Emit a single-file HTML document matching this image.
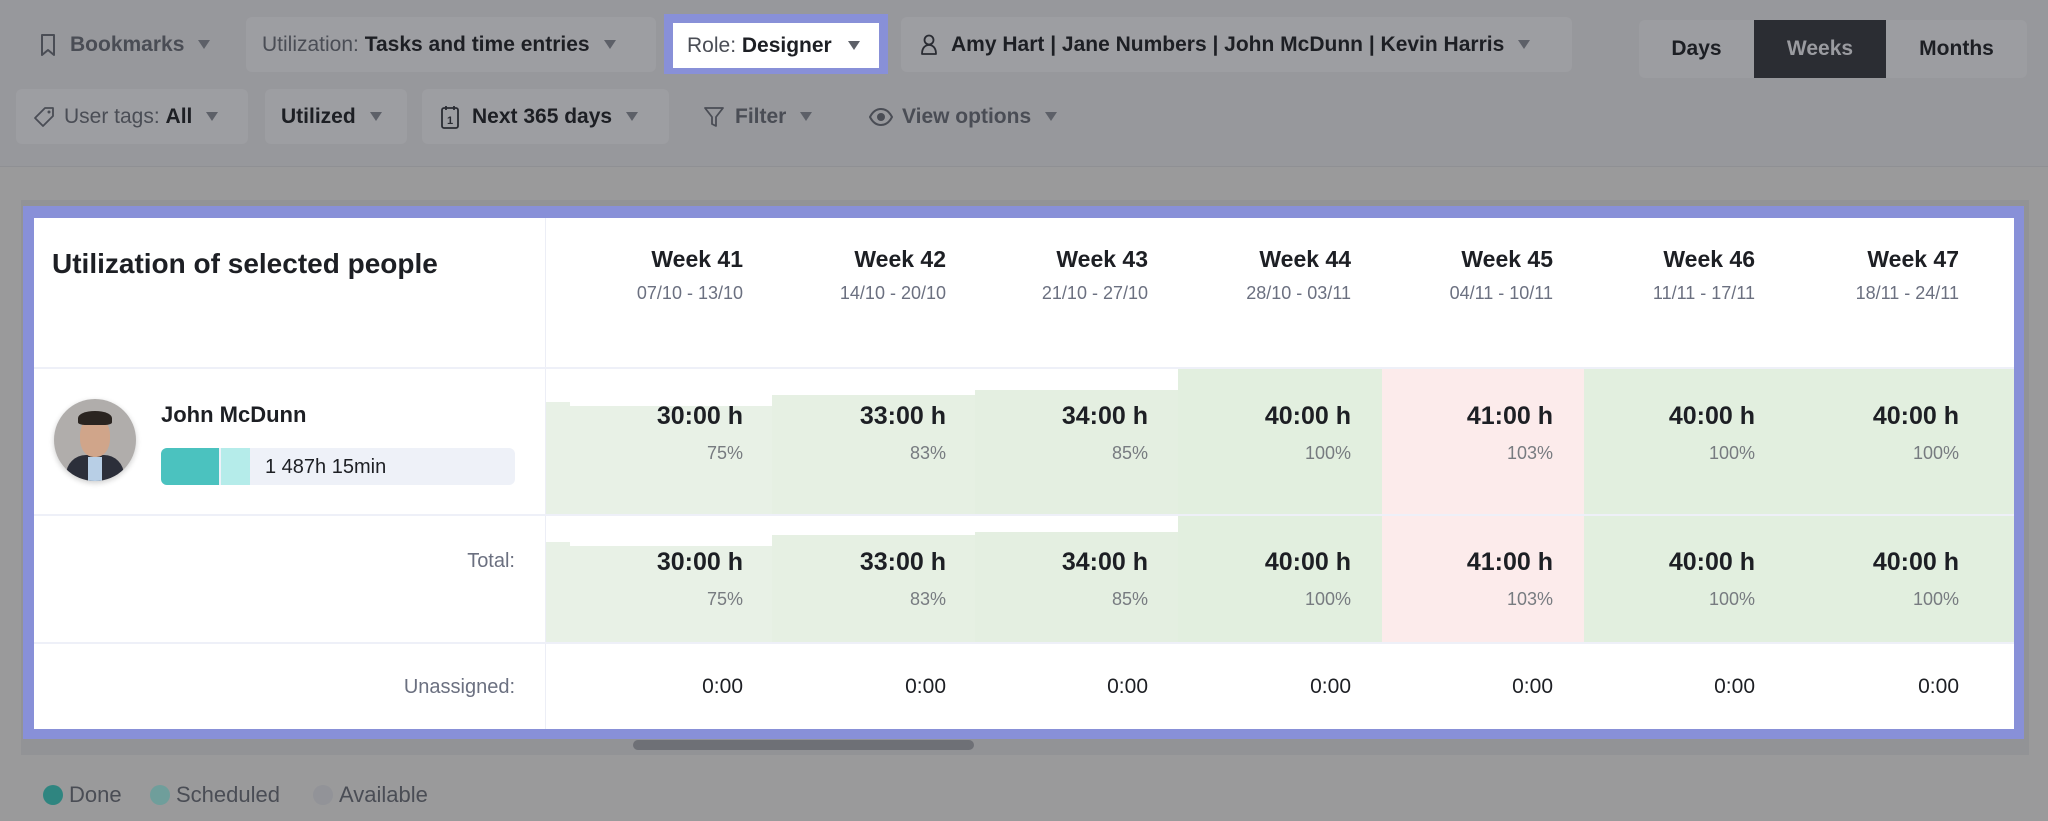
<!DOCTYPE html>
<html><head><meta charset="utf-8"><style>
*{margin:0;padding:0;box-sizing:border-box}
body{width:2048px;height:821px;background:#9a9a9b;font-family:"Liberation Sans",Arial,sans-serif;position:relative;overflow:hidden}
.a{position:absolute}
.topbg{left:0;top:0;width:2048px;height:167px;background:#97989c;border-bottom:1px solid #8f9094}
.btn{position:absolute;background:#9d9ea2;border-radius:6px;height:55px;display:flex;align-items:center;font-size:21px;color:#1d1f24;font-weight:bold;white-space:nowrap}
.lbl{color:#4a4d55;font-weight:normal}
.arr{display:inline-block;width:0;height:0;border-left:6px solid transparent;border-right:6px solid transparent;border-top:9px solid #5d6068;margin-left:14px}
.wk{position:absolute;text-align:right;width:200px}
.wt{font-size:23px;font-weight:bold;color:#1d1f24}
.wd{font-size:18px;color:#6b7080;margin-top:10px}
.h{font-size:25px;font-weight:bold;color:#1d1f24}
.p{font-size:18px;color:#777b80;margin-top:12px}
.z{font-size:21px;color:#1d1f24}
.cell{position:absolute}
</style></head><body>
<div class="a topbg"></div>

<div class="btn" style="left:30px;top:17px;width:190px;background:transparent;color:#4a4d55">
  <svg width="20" height="24" viewBox="0 0 20 24" style="margin:0 12px 0 8px"><path d="M4 2h12v20l-6-5-6 5z" fill="none" stroke="#4a4d55" stroke-width="2" stroke-linejoin="round"/></svg>Bookmarks<span class="arr"></span></div>
<div class="btn" style="left:246px;top:17px;width:410px;padding-left:16px"><span class="lbl">Utilization:&nbsp;</span>Tasks and time entries<span class="arr"></span></div>
<div class="a" style="left:664px;top:14px;width:224px;height:60px;background:#8890d8"></div>
<div class="btn" style="left:673px;top:23px;width:206px;height:45px;background:#fff;border-radius:0;padding-left:14px"><span class="lbl">Role:&nbsp;</span>Designer<span class="arr" style="margin-left:16px"></span></div>
<div class="btn" style="left:901px;top:17px;width:671px;padding-left:18px">
  <svg width="20" height="24" viewBox="0 0 20 24" style="margin-right:12px"><circle cx="10" cy="7" r="4.5" fill="none" stroke="#2a2c33" stroke-width="1.8"/><path d="M3 21c0-6 3-9 7-9s7 3 7 9z" fill="none" stroke="#2a2c33" stroke-width="1.8" stroke-linejoin="round"/></svg>Amy Hart | Jane Numbers | John McDunn | Kevin Harris<span class="arr"></span></div>
<div class="a" style="left:1639px;top:20px;width:388px;height:58px;background:#9c9da1;border-radius:6px"></div>
<div class="a" style="left:1754px;top:20px;width:132px;height:58px;background:#2b2d33"></div>
<div class="a" style="left:1639px;top:20px;width:115px;height:58px;line-height:58px;text-align:center;font-size:21px;font-weight:bold;color:#1d1f24">Days</div>
<div class="a" style="left:1754px;top:20px;width:132px;height:58px;line-height:58px;text-align:center;font-size:21px;font-weight:bold;color:#9a9ba0">Weeks</div>
<div class="a" style="left:1886px;top:20px;width:141px;height:58px;line-height:58px;text-align:center;font-size:21px;font-weight:bold;color:#1d1f24">Months</div>

<div class="btn" style="left:16px;top:89px;width:232px;padding-left:16px">
  <svg width="24" height="24" viewBox="0 0 24 24" style="margin-right:8px"><path d="M13 3h8v8L11 21 3 13z" fill="none" stroke="#4a4d55" stroke-width="1.8" stroke-linejoin="round"/><circle cx="17" cy="7" r="1.5" fill="#4a4d55"/></svg><span class="lbl">User tags:&nbsp;</span>All<span class="arr"></span></div>
<div class="btn" style="left:265px;top:89px;width:142px;padding-left:16px">Utilized<span class="arr"></span></div>
<div class="btn" style="left:422px;top:89px;width:247px;padding-left:18px">
  <svg width="20" height="26" viewBox="0 0 20 26" style="margin-right:12px"><rect x="2" y="4" width="16" height="20" rx="2" fill="none" stroke="#2a2c33" stroke-width="1.8"/><path d="M6 2v4M14 2v4" stroke="#2a2c33" stroke-width="1.8"/><text x="10" y="20" font-size="11" text-anchor="middle" fill="#2a2c33" font-family="Liberation Sans">1</text></svg>Next 365 days<span class="arr"></span></div>
<div class="btn" style="left:703px;top:89px;width:130px;background:transparent;color:#4a4d55">
  <svg width="22" height="24" viewBox="0 0 22 24" style="margin-right:10px"><path d="M2 3h18l-7 9v9l-4-2v-7z" fill="none" stroke="#4a4d55" stroke-width="1.8" stroke-linejoin="round"/></svg>Filter<span class="arr"></span></div>
<div class="btn" style="left:869px;top:89px;width:220px;background:transparent;color:#4a4d55">
  <svg width="24" height="18" viewBox="0 0 24 18" style="margin-right:9px"><path d="M1 9C4 3 8 1 12 1s8 2 11 8c-3 6-7 8-11 8S4 15 1 9z" fill="none" stroke="#4a4d55" stroke-width="2"/><circle cx="12" cy="9" r="4" fill="#4a4d55"/></svg>View options<span class="arr"></span></div>

<div class="a" style="left:21px;top:200px;width:2008px;height:555px;background:#929396"></div>
<div class="a" style="left:23px;top:206px;width:2001px;height:533px;background:#8890d8"></div>
<div class="a" style="left:34px;top:218px;width:1980px;height:511px;background:#fff"></div>
<div class="a" style="left:633px;top:740px;width:341px;height:10px;border-radius:5px;background:#6e7076"></div>

<div class="a" style="left:545px;top:218px;width:1px;height:511px;background:#eceef6"></div>
<div class="a" style="left:34px;top:367px;width:1980px;height:2px;background:#eef0f8"></div>
<div class="a" style="left:34px;top:514px;width:1980px;height:2px;background:#eef0f8"></div>
<div class="a" style="left:34px;top:642px;width:1980px;height:2px;background:#eef0f8"></div>

<div class="cell" style="left:546px;top:402px;width:24px;height:112px;background:#e8f1e6"></div>
<div class="cell" style="left:570px;top:406px;width:202px;height:108px;background:#e8f1e6"></div>
<div class="cell" style="left:772px;top:395px;width:203px;height:119px;background:#e6f0e3"></div>
<div class="cell" style="left:975px;top:390px;width:203px;height:124px;background:#e4efe1"></div>
<div class="cell" style="left:1178px;top:369px;width:204px;height:145px;background:#e2efdf"></div>
<div class="cell" style="left:1382px;top:369px;width:202px;height:145px;background:#fcebeb"></div>
<div class="cell" style="left:1584px;top:369px;width:430px;height:145px;background:#e2efdf"></div>
<div class="cell" style="left:546px;top:542px;width:24px;height:100px;background:#e8f1e6"></div>
<div class="cell" style="left:570px;top:546px;width:202px;height:96px;background:#e8f1e6"></div>
<div class="cell" style="left:772px;top:535px;width:203px;height:107px;background:#e6f0e3"></div>
<div class="cell" style="left:975px;top:532px;width:203px;height:110px;background:#e4efe1"></div>
<div class="cell" style="left:1178px;top:516px;width:204px;height:126px;background:#e2efdf"></div>
<div class="cell" style="left:1382px;top:516px;width:202px;height:126px;background:#fcebeb"></div>
<div class="cell" style="left:1584px;top:516px;width:430px;height:126px;background:#e2efdf"></div>

<div class="a" style="left:52px;top:248px;font-size:28px;font-weight:bold;color:#1d1f24">Utilization of selected people</div>
<div class="a" style="left:54px;top:399px;width:82px;height:82px;border-radius:50%;background:#b0adab;overflow:hidden;box-shadow:0 2px 6px rgba(0,0,0,.2)">
  <div style="position:absolute;left:12px;top:56px;width:58px;height:40px;border-radius:20px 20px 0 0;background:#2c2f3a"></div>
  <div style="position:absolute;left:34px;top:58px;width:14px;height:30px;background:#b8cfe6"></div>
  <div style="position:absolute;left:26px;top:18px;width:30px;height:40px;border-radius:45%;background:#d0a58a"></div>
  <div style="position:absolute;left:24px;top:12px;width:34px;height:14px;border-radius:50% 50% 20% 20%;background:#2a2420"></div>
</div>
<div class="a" style="left:161px;top:402px;font-size:22px;font-weight:bold;color:#1d1f24">John McDunn</div>
<div class="a" style="left:161px;top:448px;width:354px;height:37px;border-radius:6px;background:#eef1f8;overflow:hidden">
  <div style="position:absolute;left:0;top:0;width:58px;height:37px;background:#4bc2bf"></div>
  <div style="position:absolute;left:60px;top:0;width:29px;height:37px;background:#b5ecea"></div>
  <div style="position:absolute;left:104px;top:8px;font-size:20px;color:#1d1f24">1 487h 15min</div>
</div>
<div class="a" style="left:315px;top:550px;width:200px;text-align:right;font-size:20px;color:#6b7080">Total:</div>
<div class="a" style="left:315px;top:676px;width:200px;text-align:right;font-size:20px;color:#6b7080">Unassigned:</div>

<div class="wk" style="left:543px;top:246px"><div class="wt">Week 41</div><div class="wd">07/10 - 13/10</div></div>
<div class="wk" style="left:746px;top:246px"><div class="wt">Week 42</div><div class="wd">14/10 - 20/10</div></div>
<div class="wk" style="left:948px;top:246px"><div class="wt">Week 43</div><div class="wd">21/10 - 27/10</div></div>
<div class="wk" style="left:1151px;top:246px"><div class="wt">Week 44</div><div class="wd">28/10 - 03/11</div></div>
<div class="wk" style="left:1353px;top:246px"><div class="wt">Week 45</div><div class="wd">04/11 - 10/11</div></div>
<div class="wk" style="left:1555px;top:246px"><div class="wt">Week 46</div><div class="wd">11/11 - 17/11</div></div>
<div class="wk" style="left:1759px;top:246px"><div class="wt">Week 47</div><div class="wd">18/11 - 24/11</div></div>

<div class="wk" style="left:543px;top:402px"><div class="h">30:00 h</div><div class="p">75%</div></div>
<div class="wk" style="left:746px;top:402px"><div class="h">33:00 h</div><div class="p">83%</div></div>
<div class="wk" style="left:948px;top:402px"><div class="h">34:00 h</div><div class="p">85%</div></div>
<div class="wk" style="left:1151px;top:402px"><div class="h">40:00 h</div><div class="p">100%</div></div>
<div class="wk" style="left:1353px;top:402px"><div class="h">41:00 h</div><div class="p">103%</div></div>
<div class="wk" style="left:1555px;top:402px"><div class="h">40:00 h</div><div class="p">100%</div></div>
<div class="wk" style="left:1759px;top:402px"><div class="h">40:00 h</div><div class="p">100%</div></div>

<div class="wk" style="left:543px;top:548px"><div class="h">30:00 h</div><div class="p">75%</div></div>
<div class="wk" style="left:746px;top:548px"><div class="h">33:00 h</div><div class="p">83%</div></div>
<div class="wk" style="left:948px;top:548px"><div class="h">34:00 h</div><div class="p">85%</div></div>
<div class="wk" style="left:1151px;top:548px"><div class="h">40:00 h</div><div class="p">100%</div></div>
<div class="wk" style="left:1353px;top:548px"><div class="h">41:00 h</div><div class="p">103%</div></div>
<div class="wk" style="left:1555px;top:548px"><div class="h">40:00 h</div><div class="p">100%</div></div>
<div class="wk" style="left:1759px;top:548px"><div class="h">40:00 h</div><div class="p">100%</div></div>

<div class="wk z" style="left:543px;top:675px">0:00</div>
<div class="wk z" style="left:746px;top:675px">0:00</div>
<div class="wk z" style="left:948px;top:675px">0:00</div>
<div class="wk z" style="left:1151px;top:675px">0:00</div>
<div class="wk z" style="left:1353px;top:675px">0:00</div>
<div class="wk z" style="left:1555px;top:675px">0:00</div>
<div class="wk z" style="left:1759px;top:675px">0:00</div>

<div class="a" style="left:43px;top:785px;width:20px;height:20px;border-radius:50%;background:#2f8580"></div>
<div class="a" style="left:69px;top:782px;font-size:22px;color:#4a4d55">Done</div>
<div class="a" style="left:150px;top:785px;width:20px;height:20px;border-radius:50%;background:#6f9e9b"></div>
<div class="a" style="left:176px;top:782px;font-size:22px;color:#4a4d55">Scheduled</div>
<div class="a" style="left:313px;top:785px;width:20px;height:20px;border-radius:50%;background:#929398"></div>
<div class="a" style="left:339px;top:782px;font-size:22px;color:#4a4d55">Available</div>
</body></html>
